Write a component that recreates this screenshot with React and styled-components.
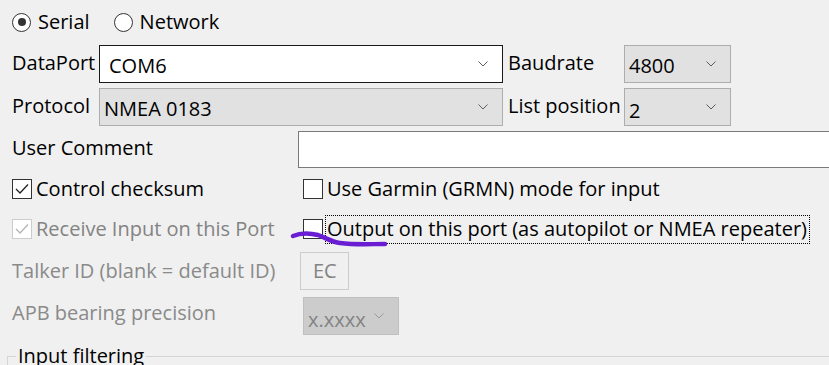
import React from "react";
import styled, { createGlobalStyle } from "styled-components";

const Global = createGlobalStyle`
  html, body { margin: 0; padding: 0; background: #f0f0f0; }
  body { font-family: "Open Sans", "Noto Sans", sans-serif; font-size: 20px; color: #000; overflow: hidden; }
`;

const Page = styled.div`
  position: relative;
  width: 829px;
  height: 365px;
  overflow: hidden;
  padding: 12px 0 0 12px;
  box-sizing: border-box;
  display: flex;
  flex-direction: column;
`;

const Row = styled.div`
  display: flex;
  align-items: ${(p) => p.$align || "center"};
  height: ${(p) => p.$h}px;
  margin-top: ${(p) => p.$mt || 0}px;
  flex-shrink: 0;
`;

const Label = styled.span`
  width: ${(p) => (p.$w ? `${p.$w}px` : "auto")};
  flex-shrink: 0;
  color: ${(p) => (p.$disabled ? "#8a8a8a" : "#000")};
  white-space: nowrap;
  line-height: 1;
  padding-top: ${(p) => p.$pt || 0}px;
  margin-left: ${(p) => p.$ml || 0}px;
  align-self: ${(p) => (p.$top ? "flex-start" : "auto")};
`;

const RadioWrap = styled.label`
  display: flex;
  align-items: center;
  gap: 7px;
  margin-right: ${(p) => p.$mr || 0}px;
  white-space: nowrap;
  line-height: 1;
`;

const RadioCircle = styled.span`
  width: 17px;
  height: 17px;
  border: 1px solid #333;
  border-radius: 50%;
  background: #fff;
  display: flex;
  align-items: center;
  justify-content: center;
  box-sizing: content-box;
  &::after {
    content: "";
    width: 8px;
    height: 8px;
    border-radius: 50%;
    background: ${(p) => (p.$on ? "#333" : "transparent")};
  }
`;

const Combo = styled.div`
  box-sizing: border-box;
  width: ${(p) => p.$w}px;
  height: 38px;
  flex-shrink: 0;
  display: flex;
  align-items: center;
  justify-content: space-between;
  padding: 4px 14px 0 ${(p) => p.$pl ?? 8}px;
  background: ${(p) => (p.$white ? "#fff" : p.$disabled ? "#cccccc" : "#e1e1e1")};
  border: 1px solid ${(p) => (p.$white ? "#1a1a1a" : p.$disabled ? "#bfbfbf" : "#adadad")};
  color: ${(p) => (p.$disabled ? "#838383" : "#000")};
  line-height: 1;
`;

const ComboText = styled.span`
  padding-top: ${(p) => p.$pt || 0}px;
`;

const Chevron = ({ color = "#5c5c5c" }) => (
  <svg width="10" height="6" viewBox="0 0 10 6" style={{ flexShrink: 0, marginTop: -4 }}>
    <polyline points="0.5,0.5 5,5 9.5,0.5" fill="none" stroke={color} strokeWidth="1" />
  </svg>
);

const TextField = styled.div`
  box-sizing: border-box;
  height: ${(p) => p.$h || 38}px;
  width: ${(p) => p.$w}px;
  flex-shrink: 0;
  background: ${(p) => (p.$disabled ? "transparent" : "#fff")};
  border: 1px solid ${(p) => (p.$disabled ? "#cccccc" : "#7a7a7a")};
  color: ${(p) => (p.$disabled ? "#838383" : "#000")};
  display: flex;
  align-items: center;
  padding-left: 12px;
  line-height: 1;
`;

const Check = styled.label`
  display: flex;
  align-items: center;
  gap: 6px;
  width: ${(p) => (p.$w ? `${p.$w}px` : "auto")};
  flex-shrink: 0;
  color: ${(p) => (p.$disabled ? "#838383" : "#000")};
  white-space: nowrap;
`;

const Box = styled.span`
  box-sizing: border-box;
  width: 20px;
  height: 20px;
  flex-shrink: 0;
  background: #fff;
  border: 1px solid ${(p) => (p.$disabled ? "#cccccc" : "#333")};
  display: flex;
  align-items: center;
  justify-content: center;
`;

const CheckText = styled.span`
  line-height: 1;
  padding: 3px 2px 4px 1px;
  margin-left: -3px;
  outline: ${(p) => (p.$focus ? "1px dotted #000" : "none")};
  outline-offset: 0;
`;

const Tick = ({ color }) => (
  <svg width="14" height="12" viewBox="0 0 14 12">
    <polyline points="1,6 5,10 13,1.5" fill="none" stroke={color} strokeWidth="1.3" />
  </svg>
);

const Group = styled.fieldset`
  margin: 0 0 0 -5px;
  padding: 0;
  border: 1px solid #d5d5d5;
  border-bottom: none;
  height: 40px;
  width: 900px;
  flex-shrink: 0;
  box-sizing: border-box;
`;

const Legend = styled.legend`
  padding: 0 2px;
  margin-left: 8px;
  font-size: 20px;
  line-height: 1;
`;

const Annotation = styled.svg`
  position: absolute;
  left: 0;
  top: 0;
  pointer-events: none;
`;

export default function App() {
  return (
    <>
      <Global />
      <Page>
        <Row $h={20}>
          <RadioWrap $mr={24}>
            <RadioCircle $on />
            <span>Serial</span>
          </RadioWrap>
          <RadioWrap>
            <RadioCircle />
            <span>Network</span>
          </RadioWrap>
        </Row>

        <Row $h={38} $mt={13}>
          <Label $w={87} $top $pt={8}>DataPort</Label>
          <Combo $w={404} $white $pl={9}>
            <ComboText>COM6</ComboText>
            <Chevron />
          </Combo>
          <Label $w={116} $top $pt={8} $ml={5}>Baudrate</Label>
          <Combo $w={107} $pl={4}>
            <ComboText>4800</ComboText>
            <Chevron />
          </Combo>
        </Row>

        <Row $h={38} $mt={5}>
          <Label $w={87} $top $pt={8}>Protocol</Label>
          <Combo $w={404} $pl={4}>
            <ComboText>NMEA 0183</ComboText>
            <Chevron />
          </Combo>
          <Label $w={116} $top $pt={8} $ml={5}>List position</Label>
          <Combo $w={107} $pl={4}>
            <ComboText $pt={4}>2</ComboText>
            <Chevron />
          </Combo>
        </Row>

        <Row $h={37} $mt={5}>
          <Label $w={286} $top $pt={7}>User Comment</Label>
          <TextField $w={560} $h={37} />
        </Row>

        <Row $h={20} $mt={11}>
          <Check $w={291}>
            <Box>
              <Tick color="#222" />
            </Box>
            <CheckText>Control checksum</CheckText>
          </Check>
          <Check>
            <Box />
            <CheckText>Use Garmin (GRMN) mode for input</CheckText>
          </Check>
        </Row>

        <Row $h={20} $mt={20}>
          <Check $w={291} $disabled>
            <Box $disabled>
              <Tick color="#b5b5b5" />
            </Box>
            <CheckText>Receive Input on this Port</CheckText>
          </Check>
          <Check>
            <Box />
            <CheckText $focus>Output on this port (as autopilot or NMEA repeater)</CheckText>
          </Check>
        </Row>

        <Row $h={38} $mt={13}>
          <Label $w={288} $disabled>Talker ID (blank = default ID)</Label>
          <TextField $w={49} $disabled>EC</TextField>
        </Row>

        <Row $h={38} $mt={7}>
          <Label $w={291} $disabled $top $pt={6}>APB bearing precision</Label>
          <Combo $w={96} $disabled $pl={4}>
            <ComboText $pt={4}>x.xxxx</ComboText>
            <Chevron color="#9a9a9a" />
          </Combo>
        </Row>

        <Row $h={40} $mt={11} $align="flex-start">
          <Group>
            <Legend>Input filtering</Legend>
          </Group>
        </Row>

        <Annotation width="829" height="365" viewBox="0 0 829 365">
          <path
            d="M293,236 C300,233 310,233 318,235 C326,238 332,242 340,243 C355,245 370,244 385,244"
            fill="none"
            stroke="#6a1dd2"
            strokeWidth="4.5"
            strokeLinecap="round"
          />
        </Annotation>
      </Page>
    </>
  );
}
